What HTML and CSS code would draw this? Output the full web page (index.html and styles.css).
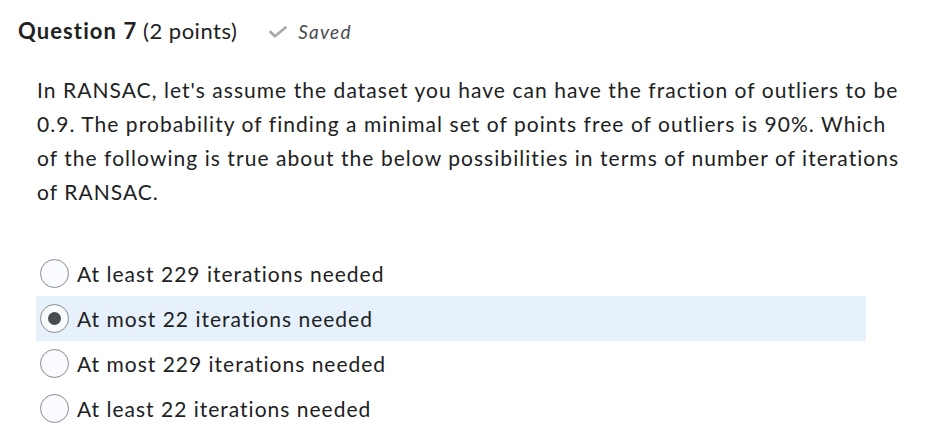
FILE: index.html
```html
<!DOCTYPE html>
<html lang="en">
<head>
<meta charset="utf-8">
<title>Question 7</title>
<link rel="stylesheet" href="styles.css">
</head>
<body>
<div class="question">
  <div class="q-header">
    <h2 class="q-title"><strong>Question 7</strong> <span class="points">(2 points)</span></h2>
    <span class="saved">
      <svg class="check" width="18" height="12" viewBox="0 0 18 12" aria-hidden="true">
        <path d="M1.5 6 L6 10.3 L16.5 1.5" fill="none" stroke="#a3a8ac" stroke-width="2.6" stroke-linecap="round" stroke-linejoin="round"/>
      </svg>
      <em>Saved</em>
    </span>
  </div>
  <p class="q-text">In RANSAC, let's assume the dataset you have can have the fraction of outliers to be 0.9. The probability of finding a minimal set of points free of outliers is 90%. Which of the following is true about the below possibilities in terms of number of iterations of RANSAC.</p>
  <div class="options">
    <label class="option"><span class="radio"></span><span class="opt-text">At least 229 iterations needed</span></label>
    <label class="option selected"><span class="radio checked"></span><span class="opt-text">At most 22 iterations needed</span></label>
    <label class="option"><span class="radio"></span><span class="opt-text">At most 229 iterations needed</span></label>
    <label class="option"><span class="radio"></span><span class="opt-text">At least 22 iterations needed</span></label>
  </div>
</div>
</body>
</html>
```
FILE: styles.css
```css
* { box-sizing: border-box; }
html, body { margin: 0; padding: 0; background: #ffffff; }
body {
  font-family: Lato, "Noto Sans", sans-serif;
  color: #202122;
  font-variant-ligatures: none;
}
.question {
  padding: 15px 0 0 0;
  width: 943px;
}
.q-header {
  display: flex;
  align-items: center;
  padding-left: 18px;
  height: 32px;
}
.q-title {
  margin: 0;
  font-size: 22px;
  font-weight: 400;
  line-height: 32px;
  white-space: nowrap;
}
.q-title strong { font-weight: 700; letter-spacing: 1.1px; }
.points { letter-spacing: 0.5px; }
.saved {
  display: flex;
  align-items: center;
  margin-left: 32px;
  font-size: 19px;
  letter-spacing: 1.2px;
  color: #494c4e;
  padding-top: 1px;
}
.saved .check { margin-right: 11px; margin-top: 1px; }
.saved em { font-style: italic; }
.q-text {
  margin: 26px 0 0 37px;
  width: 864px;
  font-size: 21px;
  line-height: 34px;
  letter-spacing: 1.05px;
}
.options {
  margin: 42px 0 0 36px;
  width: 830px;
  display: flex;
  flex-direction: column;
}
.option {
  display: flex;
  align-items: center;
  height: 45px;
  padding-left: 4px;
  font-size: 21px;
  line-height: 45px;
  letter-spacing: 1px;
}
.option.selected { background: #e6f1fb; }
.radio {
  width: 29px;
  height: 29px;
  border-radius: 50%;
  border: 1px solid #868b8f;
  background: #f9fbff;
  display: flex;
  align-items: center;
  justify-content: center;
  flex: none;
}
.radio.checked::after {
  content: "";
  width: 13px;
  height: 13px;
  border-radius: 50%;
  background: #494c4e;
}
.opt-text { margin-left: 8px; }
```
